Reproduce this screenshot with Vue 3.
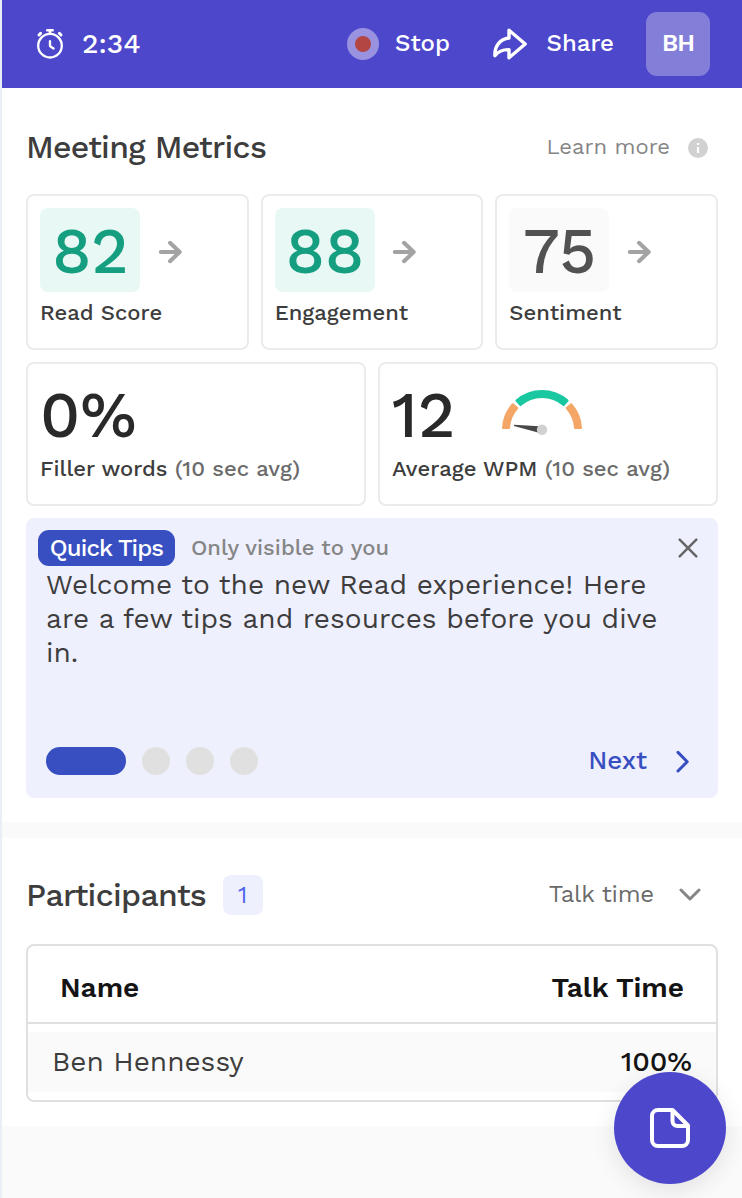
<script setup>
import { ref } from 'vue';

const scores = [
    { label: 'Read Score', value: 82, tone: 'good' },
    { label: 'Engagement', value: 88, tone: 'good' },
    { label: 'Sentiment', value: 75, tone: 'neutral' }
];

const participants = [
    { name: 'Ben Hennessy', talkTime: 100 }
];

const tipCount = 4;
const activeTip = ref(0);
const showTips = ref(true);

function nextTip() {
    activeTip.value = (activeTip.value + 1) % tipCount;
}
</script>

<template>
    <div class="panel">
        <header class="topbar">
            <svg class="timer-icon" width="30" height="34" viewBox="0 0 30 34" fill="none" stroke="#fff" stroke-linecap="round">
                <circle cx="15" cy="18.7" r="11.8" stroke-width="2.3" />
                <path d="M15 14.2v4.3q0 .8.8 1.3l2.8 1.7" stroke-width="2.4" />
                <path d="M12.3 3.2h5.4M15 3.5v3" stroke-width="2.6" />
                <path d="M4 8l1.6-1.6M26 8l-1.6-1.6" stroke-width="3" />
            </svg>
            <span class="time">2:34</span>
            <span class="record"></span>
            <span class="stop">Stop</span>
            <svg class="share-icon" width="36" height="34" viewBox="0 0 36 34" fill="none" stroke="#fff" stroke-width="3.4" stroke-linejoin="round">
                <path d="M17 3.2L33.2 17 17 30.8v-8.2C11 22.5 6.5 24 2.9 28.6 2.5 19 8 12 17 11z" />
            </svg>
            <span class="share">Share</span>
            <div class="avatar"><span>BH</span></div>
        </header>

        <section class="metrics">
            <div class="section-header">
                <h2>Meeting Metrics</h2>
                <span class="learn">Learn more</span>
                <svg width="20" height="20" viewBox="0 0 20 20">
                    <circle cx="10" cy="10" r="10" fill="#d1d1d1" />
                    <path d="M10 9v6M10 5v2" stroke="#fff" stroke-width="2.2" />
                </svg>
            </div>

            <div class="cards">
                <div v-for="score in scores" :key="score.label" class="card score-card">
                    <div class="score-row">
                        <div class="score" :class="score.tone">{{ score.value }}</div>
                        <svg width="24" height="24" viewBox="0 0 24 24" fill="none" stroke="#a3a3a3" stroke-width="4" stroke-linecap="round" stroke-linejoin="round">
                            <path d="M2.8 12h18.9M12 2.8l9.7 9.2-9.7 9.2" />
                        </svg>
                    </div>
                    <div class="label">{{ score.label }}</div>
                </div>
            </div>

            <div class="cards">
                <div class="card wide-card">
                    <div class="big">0%</div>
                    <div class="label">Filler words <span class="muted">(10 sec avg)</span></div>
                </div>
                <div class="card wide-card">
                    <div class="wpm-row">
                        <div class="big">12</div>
                        <svg width="80" height="46" viewBox="0 0 80 46" stroke-width="2" stroke-linejoin="round">
                            <g fill="#f4a666" stroke="#f4a666">
                                <path d="M1 38A39 39 0 0 1 10.8 14.2L15.3 18.1A33 33 0 0 0 7 38z" />
                                <path d="M79 38A39 39 0 0 0 69.2 14.2L64.7 18.1A33 33 0 0 1 73 38z" />
                            </g>
                            <path d="M14.4 10.6A39 39 0 0 1 65.6 10.6L61.6 15.1A33 33 0 0 0 18.4 15.1z" fill="#19c8a1" stroke="#19c8a1" />
                            <path d="M12 34.7L37 36.3 36 42.5 12 36z" fill="#484848" />
                            <circle cx="40" cy="39.8" r="5.2" fill="#d1d1d1" />
                        </svg>
                    </div>
                    <div class="label">Average WPM <span class="muted">(10 sec avg)</span></div>
                </div>
            </div>

            <div v-if="showTips" class="tips">
                <div class="tips-header">
                    <span class="badge">Quick Tips</span>
                    <span class="visible">Only visible to you</span>
                    <svg class="close" width="20" height="20" viewBox="0 0 20 20" stroke="#666" stroke-width="2.5" stroke-linecap="round" @click="showTips = false">
                        <path d="M1.7 1.7l16.6 16.6M18.3 1.7L1.7 18.3" />
                    </svg>
                </div>
                <p class="tip-text">Welcome to the new Read experience! Here are a few tips and resources before you dive in.</p>
                <div class="tips-footer">
                    <span v-for="n in tipCount" :key="n" class="dot" :class="{ active: n - 1 === activeTip }"></span>
                    <button class="next" @click="nextTip">
                        <span>Next</span>
                        <svg width="14" height="24" viewBox="0 0 14 24" fill="none" stroke="#384fc2" stroke-width="3" stroke-linecap="round" stroke-linejoin="round">
                            <path d="M2 3.4l9.2 9.3L2 22" />
                        </svg>
                    </button>
                </div>
            </div>
        </section>

        <section class="participants">
            <div class="section-header">
                <h2>Participants</h2>
                <span class="count">{{ participants.length }}</span>
                <span class="sort">Talk time</span>
                <svg width="22" height="14" viewBox="0 0 22 14" fill="none" stroke="#858585" stroke-width="3" stroke-linecap="round" stroke-linejoin="round">
                    <path d="M2 2l9 9 9-9" />
                </svg>
            </div>
            <div class="table">
                <div class="table-head">
                    <span>Name</span>
                    <span>Talk Time</span>
                </div>
                <div v-for="person in participants" :key="person.name" class="table-row">
                    <span>{{ person.name }}</span>
                    <span class="percent">{{ person.talkTime }}%</span>
                </div>
            </div>
        </section>

        <button class="fab">
            <svg width="44" height="44" viewBox="0 0 44 44" fill="none" stroke="#fff" stroke-width="4" stroke-linejoin="round">
                <path d="M24.5 4H10a6 6 0 0 0-6 6v24a6 6 0 0 0 6 6h24a6 6 0 0 0 6-6V19.5z" />
                <path d="M24.5 4v11a5 5 0 0 0 5 5H40" />
            </svg>
        </button>
    </div>
</template>

<style>
body {
    margin: 0;
    background: #fafafa;
}
</style>

<style scoped>
.panel {
    position: relative;
    box-sizing: border-box;
    width: 742px;
    height: 1198px;
    border-left: 2px solid #e9eef7;
    background: #fafafa;
    font-family: "Work Sans", Inter, sans-serif;
    color: #3d3d3d;
    overflow: hidden;
}

.topbar {
    display: flex;
    align-items: center;
    height: 88px;
    padding: 0 32px 0 33px;
    box-sizing: border-box;
    background: #4d47cc;
    color: #fff;
    font-size: 24px;
    font-weight: 500;
}

.topbar span {
    margin-top: -2px;
}

.topbar .record {
    width: 16px;
    height: 16px;
    margin-top: 0;
    border: 8px solid #9892e1;
    border-radius: 50%;
    background: #b34642;
}

.time {
    flex: 1;
    margin-left: 17px;
    font-size: 28px;
}

.stop {
    width: 97px;
    margin-left: 16px;
}

.share {
    width: 99.5px;
    margin-left: 18.5px;
}

.avatar {
    display: flex;
    align-items: center;
    justify-content: center;
    width: 64px;
    height: 64px;
    border-radius: 11px;
    background: #837fd9;
    font-weight: 600;
    letter-spacing: -1px;
}

.metrics {
    height: 734px;
    padding: 0 24px;
    box-sizing: border-box;
    background: #fff;
}

.section-header {
    display: flex;
    align-items: center;
    height: 106px;
    padding-top: 13px;
    box-sizing: border-box;
}

h2 {
    margin: -2px 0 0;
    font-size: 32px;
    font-weight: 500;
    line-height: 40px;
    letter-spacing: -0.68px;
}

.learn {
    margin: -2px 18px 0 auto;
    color: #858585;
    font-size: 22px;
}

.metrics .section-header svg {
    margin-right: 10px;
}

.cards {
    display: flex;
    gap: 12px;
    margin-bottom: 12px;
}

.card {
    flex: 1;
    box-sizing: border-box;
    padding: 12px;
    border: 2px solid #ebebeb;
    border-radius: 8px;
}

.score-card {
    height: 156px;
}

.score-row {
    display: flex;
    align-items: center;
    gap: 17.5px;
}

.score {
    width: 100px;
    height: 84px;
    border-radius: 8px;
    font-size: 64px;
    font-weight: 500;
    line-height: 86px;
    letter-spacing: -0.5px;
    text-align: center;
}

.good {
    background: #e8f8f4;
    color: #159e80;
}

.neutral {
    background: #fafafa;
    color: #525252;
}

.score-row svg {
    margin-top: 4px;
}

.label {
    font-size: 22px;
    font-weight: 500;
    line-height: 30px;
    letter-spacing: 0.03px;
}

.score-card .label {
    margin-top: 6px;
}

.wide-card {
    height: 144px;
}

.big {
    height: 78px;
    color: #292929;
    font-size: 64px;
    font-weight: 500;
    line-height: 78px;
}

.wpm-row {
    display: flex;
    gap: 47px;
}

.wpm-row svg {
    margin-top: 14px;
}

.muted {
    color: #6b6b6b;
}

.tips {
    display: flex;
    flex-direction: column;
    height: 280px;
    padding: 12px;
    box-sizing: border-box;
    border-radius: 8px;
    background: #eff0fd;
}

.tips-header {
    display: flex;
    align-items: center;
    height: 36px;
}

.badge {
    width: 137px;
    height: 36px;
    margin-right: 16px;
    border-radius: 11px;
    background: #384fc2;
    color: #fff;
    font-size: 24px;
    font-weight: 500;
    line-height: 36px;
    letter-spacing: -0.9px;
    text-align: center;
}

.visible {
    margin-top: -2px;
    color: #858585;
    font-size: 22px;
    font-weight: 500;
    letter-spacing: 0.05px;
}

.close {
    margin: 0 8px 0 auto;
}

.tip-text {
    margin: 2px 24px 0 8px;
    font-size: 28px;
    line-height: 34px;
    letter-spacing: 0.03px;
}

.tips-footer {
    display: flex;
    align-items: center;
    gap: 16px;
    height: 28px;
    margin: auto 16px 11px 8px;
}

.dot {
    width: 28px;
    height: 28px;
    border-radius: 14px;
    background: #e0e0e0;
}

.dot.active {
    width: 80px;
    background: #384fc2;
}

.next {
    display: flex;
    align-items: center;
    gap: 29px;
    margin-left: auto;
    padding: 0;
    border: 0;
    background: none;
    color: #384fc2;
    font: 500 26px "Work Sans", Inter, sans-serif;
}

.next span {
    margin-top: -2px;
}

.participants {
    height: 288px;
    margin-top: 16px;
    padding: 0 24px;
    box-sizing: border-box;
    background: #fff;
}

.participants .section-header {
    padding-top: 8px;
}

.participants h2 {
    margin-top: 0;
}

.count {
    width: 40px;
    height: 40px;
    margin-left: 16.5px;
    border-radius: 8px;
    background: #eff0fd;
    color: #4f67ed;
    font-size: 24px;
    line-height: 40px;
    text-align: center;
}

.sort {
    margin: -2px 25px 0 auto;
    color: #6b6b6b;
    font-size: 24px;
    letter-spacing: -0.2px;
}

.participants .section-header svg {
    margin-right: 17px;
}

.table {
    box-sizing: border-box;
    height: 158px;
    border: 2px solid #e0e0e0;
    border-radius: 8px;
}

.table-head {
    display: flex;
    justify-content: space-between;
    height: 76px;
    margin-bottom: 8px;
    padding: 0 32px;
    border-bottom: 2px solid #e0e0e0;
    color: #141414;
    font-size: 28px;
    font-weight: 600;
    line-height: 83px;
}

.table-row {
    display: flex;
    justify-content: space-between;
    height: 60px;
    padding: 0 24px;
    background: #fafafa;
    font-size: 28px;
    line-height: 60px;
}

.percent {
    color: #141414;
    font-weight: 500;
}

.fab {
    position: absolute;
    right: 16px;
    bottom: 14px;
    display: flex;
    align-items: center;
    justify-content: center;
    width: 112px;
    height: 112px;
    padding: 0;
    border: 0;
    border-radius: 50%;
    background: #4d47cc;
    box-shadow: 0 6px 24px rgba(0, 0, 0, 0.1);
}
</style>
